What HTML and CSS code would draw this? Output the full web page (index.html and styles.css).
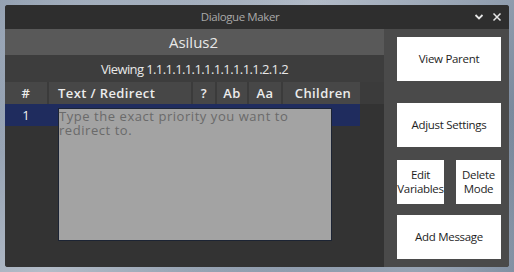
FILE: index.html
```html
<!DOCTYPE html>
<html>
<head>
<meta charset="utf-8">
<link rel="stylesheet" href="styles.css">
</head>
<body>
<div class="window">
  <div class="titlebar">
    <span class="title">Dialogue Maker</span>
    <div class="controls">
      <svg class="chev" width="10" height="8" viewBox="0 0 10 8"><path d="M1.5 2 L5 5.5 L8.5 2" fill="none" stroke="#e6e6e6" stroke-width="1.8"/></svg>
      <svg class="close" width="10" height="10" viewBox="0 0 10 10"><path d="M1.5 1.5 L8.5 8.5 M8.5 1.5 L1.5 8.5" fill="none" stroke="#e6e6e6" stroke-width="1.5"/></svg>
    </div>
  </div>
  <div class="content">
    <div class="main">
      <div class="npc">Asilus2</div>
      <div class="viewing">Viewing 1.1.1.1.1.1.1.1.1.1.1.1.2.1.2</div>
      <div class="cols">
        <div class="col c-num">#</div>
        <div class="col c-text">Text / Redirect</div>
        <div class="col c-q">?</div>
        <div class="col c-ab">Ab</div>
        <div class="col c-aa">Aa</div>
        <div class="col c-children">Children</div>
      </div>
      <div class="list">
        <div class="row"><span class="num">1</span></div>
        <div class="editor">Type the exact priority you want to redirect to.</div>
      </div>
    </div>
    <div class="side">
      <button class="btn b-parent">View Parent</button>
      <button class="btn b-settings">Adjust Settings</button>
      <div class="pair">
        <button class="btn small">Edit Variables</button>
        <button class="btn small">Delete Mode</button>
      </div>
      <button class="btn b-add">Add Message</button>
    </div>
  </div>
</div>
</body>
</html>
```
FILE: styles.css
```css
* { box-sizing: border-box; }
html, body { margin: 0; height: 100%; }
body {
  width: 514px;
  height: 272px;
  overflow: hidden;
  padding: 5px 5px 5px 5px;
  background:
    radial-gradient(ellipse at 20% 10%, #a7b2c0 0%, transparent 40%),
    radial-gradient(ellipse at 80% 95%, #9aa6b6 0%, transparent 45%),
    linear-gradient(135deg, #7f8ea2 0%, #b3bcc8 40%, #8896a8 70%, #5d6f86 100%);
  font-family: "Open Sans", "Noto Sans", sans-serif;
}
.window {
  width: 504px;
  height: 262px;
  border-radius: 3px;
  overflow: hidden;
  display: flex;
  flex-direction: column;
  background: #333333;
}
.titlebar {
  height: 24px;
  flex: none;
  background: #2e2e2e;
  display: flex;
  align-items: center;
  justify-content: center;
  position: relative;
  padding-right: 34px;
}
.title {
  color: #a9a9a9;
  font-family: "Open Sans", sans-serif;
  font-size: 11.5px;
  letter-spacing: -0.4px;
  margin-top: -1px;
}
.controls {
  position: absolute;
  right: 7px;
  top: 7px;
  display: flex;
  gap: 8px;
  align-items: center;
}
.content {
  flex: 1;
  display: flex;
}
.main {
  width: 379px;
  display: flex;
  flex-direction: column;
  background: #333333;
}
.npc {
  height: 26px;
  background: #595959;
  color: #e8e8e8;
  font-size: 15px;
  display: flex;
  align-items: center;
  justify-content: center;
  padding-right: 2px;
}
.viewing {
  height: 27px;
  background: #3d3d3d;
  color: #e8e8e8;
  font-size: 13px;
  letter-spacing: -0.6px;
  display: flex;
  align-items: center;
  justify-content: center;
  padding-top: 1px;
}
.cols {
  height: 22px;
  display: flex;
  gap: 2px;
  background: #3b3b3b;
  padding-right: 24px;
  color: #ececec;
  font-size: 13px;
  font-weight: 600;
  letter-spacing: 0.4px;
}
.col {
  background: #474747;
  display: flex;
  align-items: center;
  justify-content: center;
}
.c-num { width: 42px; }
.c-text { width: 142px; justify-content: flex-start; padding-left: 9px; }
.c-q { width: 22px; }
.c-ab { width: 30px; }
.c-aa { width: 32px; }
.c-children { flex: 1; padding-left: 3px; }
.list {
  flex: 1;
  position: relative;
}
.row {
  height: 22px;
  width: 355px;
  background: #1f2c5e;
  display: flex;
  align-items: center;
}
.num {
  width: 42px;
  text-align: center;
  color: #f2f2f2;
  font-size: 13px;
}
.editor {
  position: absolute;
  left: 53px;
  top: 4px;
  width: 274px;
  height: 133px;
  background: #a3a3a3;
  border: 1px solid #1c2434;
  color: #6a6a6a;
  font-size: 13px;
  line-height: 14px;
  letter-spacing: 0.55px;
  padding: 0 30px 0 0;
}
.side {
  flex: 1;
  background: #4a4a4a;
  padding: 8px 8px 0 13px;
  display: flex;
  flex-direction: column;
}
.btn {
  border: none;
  margin: 0;
  background: #ffffff;
  color: #1e1e1e;
  font-family: "Open Sans", sans-serif;
  font-size: 11.5px;
  letter-spacing: -0.3px;
  padding: 0;
  display: flex;
  align-items: center;
  justify-content: center;
  text-align: center;
  line-height: 14px;
}
.b-parent { height: 44px; }
.b-settings { height: 44px; margin-top: 22px; }
.pair {
  margin-top: 13px;
  height: 44px;
  display: flex;
  justify-content: space-between;
}
.small { width: 47px; height: 44px; }
.pair .small:last-child { width: 45px; }
.b-add { height: 44px; margin-top: 11px; }
```
